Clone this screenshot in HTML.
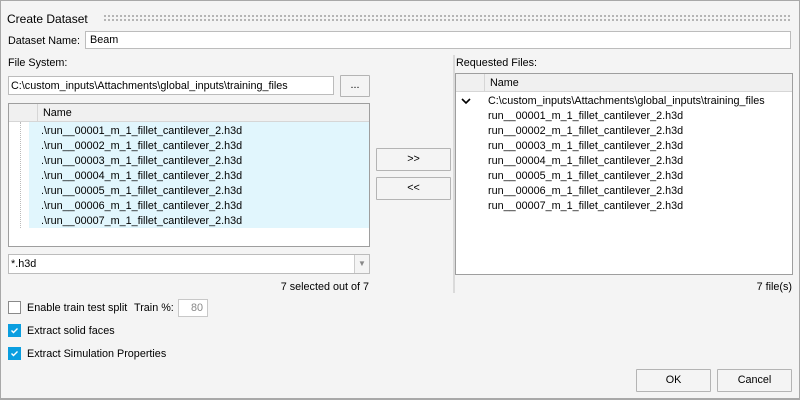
<!DOCTYPE html>
<html><head><style>
*{box-sizing:border-box;margin:0;padding:0}
body{width:800px;height:400px;background:#f4f4f4;font-family:"Liberation Sans",sans-serif;font-size:10.8px;color:#000;position:relative;overflow:hidden}
.a{position:absolute;white-space:nowrap}
.frame{position:absolute;left:0;top:0;width:800px;height:400px;border:1px solid #a8a8a8;border-bottom:2px solid #a8a8a8}
.inp{position:absolute;background:#fff;border:1px solid #bcbcbc;padding:0 4px;line-height:16px}
.btn{position:absolute;background:#f4f4f4;border:1px solid #b4b4b4;text-align:center;border-radius:1px}
.tree{position:absolute;background:#fff;border:1px solid #9e9e9e}
.hdr{position:absolute;left:0;top:0;right:0;height:18px;background:#f0f0f0;border-bottom:1px solid #d6d6d6}
.row{position:absolute;height:15px;line-height:15px}
.cb{position:absolute;width:13px;height:13px;border:1px solid #8a8a8a;background:#fff}
.cb.on{background:#0a9ee0;border-color:#0a9ee0}
</style></head><body>
<div class="frame"></div>
<div class="a" style="left:7px;top:12px;font-size:12px">Create Dataset</div>
<div class="a" style="left:103px;top:14px;width:688px;height:8px;background-image:radial-gradient(circle,#a0a0a0 0.8px,transparent 1px);background-size:4px 4px"></div>
<div class="a" style="left:8px;top:35px">Dataset Name:</div>
<div class="inp" style="left:85px;top:31px;width:706px;height:18px">Beam</div>
<div class="a" style="left:8px;top:57px">File System:</div>
<div class="inp" style="left:8px;top:76px;width:326px;height:19px;line-height:18px;padding-left:2px">C:\custom_inputs\Attachments\global_inputs\training_files</div>
<div class="btn" style="left:340px;top:75px;width:30px;height:22px;line-height:18px">...</div>
<div class="tree" style="left:8px;top:103px;width:362px;height:144px">
 <div class="hdr"><div class="a" style="left:28px;top:0;width:1px;height:18px;background:#d6d6d6"></div><div class="a" style="left:34px;top:3px">Name</div></div>
 <div class="a" style="left:20px;top:18px;width:340px;height:106px;background:#e1f6fd"></div>
 <div class="a" style="left:11px;top:18px;width:1px;height:106px;border-left:1px dotted #bbb"></div>
 <div class="row" style="left:32px;top:20px">.\run__00001_m_1_fillet_cantilever_2.h3d</div>
 <div class="row" style="left:32px;top:35px">.\run__00002_m_1_fillet_cantilever_2.h3d</div>
 <div class="row" style="left:32px;top:50px">.\run__00003_m_1_fillet_cantilever_2.h3d</div>
 <div class="row" style="left:32px;top:65px">.\run__00004_m_1_fillet_cantilever_2.h3d</div>
 <div class="row" style="left:32px;top:80px">.\run__00005_m_1_fillet_cantilever_2.h3d</div>
 <div class="row" style="left:32px;top:95px">.\run__00006_m_1_fillet_cantilever_2.h3d</div>
 <div class="row" style="left:32px;top:110px">.\run__00007_m_1_fillet_cantilever_2.h3d</div>
</div>
<div class="inp" style="left:8px;top:254px;width:362px;height:20px;line-height:18px;padding-left:2px">*.h3d</div>
<div class="a" style="left:354px;top:255px;width:15px;height:18px;border-left:1px solid #ccc;background:#f4f4f4;color:#888;font-size:8px;text-align:center;line-height:18px">&#9660;</div>
<div class="a" style="right:431px;top:281px">7 selected out of 7</div>
<div class="cb" style="left:8px;top:301px"></div>
<div class="a" style="left:27px;top:302px">Enable train test split</div>
<div class="a" style="left:134px;top:302px">Train %:</div>
<div class="inp" style="left:178px;top:299px;width:30px;height:18px;color:#888;text-align:right;border-color:#c8c8c8">80</div>
<div class="cb on" style="left:8px;top:324px"><svg width="11" height="11" style="position:absolute;left:0;top:0"><path d="M2.5 5.5 L4.5 7.5 L8.5 3.5" stroke="#fff" stroke-width="1.4" fill="none"/></svg></div>
<div class="a" style="left:27px;top:325px">Extract solid faces</div>
<div class="cb on" style="left:8px;top:347px"><svg width="11" height="11" style="position:absolute;left:0;top:0"><path d="M2.5 5.5 L4.5 7.5 L8.5 3.5" stroke="#fff" stroke-width="1.4" fill="none"/></svg></div>
<div class="a" style="left:27px;top:348px">Extract Simulation Properties</div>
<div class="btn" style="left:376px;top:148px;width:75px;height:23px;line-height:21px">&gt;&gt;</div>
<div class="btn" style="left:376px;top:177px;width:75px;height:23px;line-height:21px">&lt;&lt;</div>
<div class="a" style="left:453px;top:55px;width:2px;height:238px;background:#dadada"></div>
<div class="a" style="left:456px;top:57px">Requested Files:</div>
<div class="tree" style="left:455px;top:73px;width:338px;height:202px">
 <div class="hdr"><div class="a" style="left:28px;top:0;width:1px;height:18px;background:#d6d6d6"></div><div class="a" style="left:34px;top:3px">Name</div></div>
 <svg class="a" style="left:5px;top:23px" width="10" height="8"><path d="M1 2 L5 6 L9 2" stroke="#000" stroke-width="1.6" fill="none"/></svg>
 <div class="row" style="left:32px;top:20px">C:\custom_inputs\Attachments\global_inputs\training_files</div>
 <div class="row" style="left:32px;top:35px">run__00001_m_1_fillet_cantilever_2.h3d</div>
 <div class="row" style="left:32px;top:50px">run__00002_m_1_fillet_cantilever_2.h3d</div>
 <div class="row" style="left:32px;top:65px">run__00003_m_1_fillet_cantilever_2.h3d</div>
 <div class="row" style="left:32px;top:80px">run__00004_m_1_fillet_cantilever_2.h3d</div>
 <div class="row" style="left:32px;top:95px">run__00005_m_1_fillet_cantilever_2.h3d</div>
 <div class="row" style="left:32px;top:110px">run__00006_m_1_fillet_cantilever_2.h3d</div>
 <div class="row" style="left:32px;top:125px">run__00007_m_1_fillet_cantilever_2.h3d</div>
</div>
<div class="a" style="right:8px;top:281px">7 file(s)</div>
<div class="btn" style="left:636px;top:369px;width:75px;height:23px;line-height:21px">OK</div>
<div class="btn" style="left:717px;top:369px;width:75px;height:23px;line-height:21px">Cancel</div>
</body></html>
